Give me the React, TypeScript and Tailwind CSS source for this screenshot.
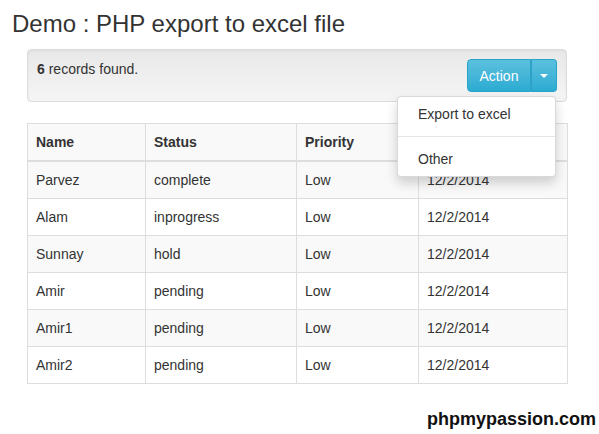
const rows = [
  { name: 'Parvez', status: 'complete' },
  { name: 'Alam', status: 'inprogress' },
  { name: 'Sunnay', status: 'hold' },
  { name: 'Amir', status: 'pending' },
  { name: 'Amir1', status: 'pending' },
  { name: 'Amir2', status: 'pending' },
]

export default function App() {
  return (
    <div className="relative h-[434px] w-[599px] bg-white font-['Liberation_Sans',Arial,sans-serif] text-[14px] leading-5 text-[#333]">
      <h1 className="pl-3 pt-[10px] text-[24px] leading-[28px] text-[#333]">Demo : PHP export to excel file</h1>

      <div className="ml-[27px] w-[540px]">
        {/* well with split button */}
        <div className="relative mt-[11px] flex items-start justify-between rounded border border-[#dcdcdc] bg-gradient-to-b from-[#e8e8e8] to-[#f5f5f5] p-[9px] shadow-[inset_0_1px_3px_rgba(0,0,0,0.05)]">
          <p>
            <b>6</b> records found.
          </p>
          <div className="flex h-[33px]">
            <button className="w-16 rounded-l border border-[#28a4c9] bg-gradient-to-b from-[#5bc0de] to-[#2aabd2] text-white">
              Action
            </button>
            <button className="flex w-[26px] items-center justify-center rounded-r border border-l-0 border-[#28a4c9] bg-gradient-to-b from-[#5bc0de] to-[#2aabd2] shadow-[inset_1px_0_0_#31a0c4]">
              <span className="border-x-[4px] border-t-[4px] border-x-transparent border-t-white" />
            </button>
          </div>

          <ul className="absolute right-[10px] top-[46px] z-10 w-[159px] rounded border border-[rgba(0,0,0,0.15)] bg-white pb-[4px] pt-[4px] shadow-[0_6px_12px_rgba(0,0,0,0.175)]">
            <li className="px-5 py-[3px] leading-5">Export to excel</li>
            <li className="my-[9px] h-px bg-[#e5e5e5]" />
            <li className="px-5 py-[3px] leading-5">Other</li>
          </ul>
        </div>

        <table className="mt-[21px] w-[540px] table-fixed border-collapse border border-[#ddd]">
          <colgroup>
            <col className="w-[118px]" />
            <col className="w-[151px]" />
            <col className="w-[122px]" />
            <col className="w-[149px]" />
          </colgroup>
          <thead>
            <tr className="bg-[#f9f9f9]">
              <th className="border border-b-2 border-[#ddd] px-2 py-2 text-left font-bold">Name</th>
              <th className="border border-b-2 border-[#ddd] px-2 py-2 text-left font-bold">Status</th>
              <th className="border border-b-2 border-[#ddd] px-2 py-2 text-left font-bold">Priority</th>
              <th className="border border-b-2 border-[#ddd] px-2 py-2 text-left font-bold">Date</th>
            </tr>
          </thead>
          <tbody>
            {rows.map((r, i) => (
              <tr key={r.name} className={i % 2 === 0 ? 'bg-[#f9f9f9]' : 'bg-white'}>
                <td className="border border-[#ddd] px-2 py-2">{r.name}</td>
                <td className="border border-[#ddd] px-2 py-2">{r.status}</td>
                <td className="border border-[#ddd] px-2 py-2">Low</td>
                <td className="border border-[#ddd] px-2 py-2">12/2/2014</td>
              </tr>
            ))}
          </tbody>
        </table>
      </div>

      <p className="mt-[23px] pr-[3px] text-right text-[18px] font-bold leading-6 text-[#111]">phpmypassion.com</p>
    </div>
  )
}
